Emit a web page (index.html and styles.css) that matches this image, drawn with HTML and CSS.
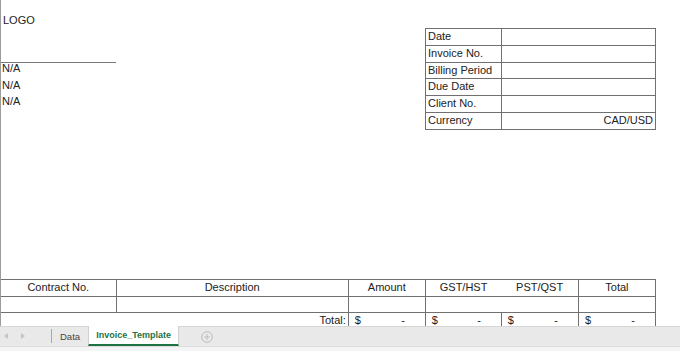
FILE: index.html
```html
<!DOCTYPE html>
<html lang="en">
<head>
    <meta charset="UTF-8">
    <title>Invoice_Template</title>
    <link rel="stylesheet" href="styles.css">
</head>
<body>
    <div class="sheet">
        <div class="top">
            <div class="from">
                <div class="logo">LOGO</div>
                <div class="sig-line"></div>
                <div class="na-list">
                    <div>N/A</div>
                    <div>N/A</div>
                    <div>N/A</div>
                </div>
            </div>

            <table class="meta">
                <colgroup><col class="meta-key"><col></colgroup>
                <tr><td>Date</td><td></td></tr>
                <tr><td>Invoice No.</td><td></td></tr>
                <tr><td>Billing Period</td><td></td></tr>
                <tr><td>Due Date</td><td></td></tr>
                <tr><td>Client No.</td><td></td></tr>
                <tr><td>Currency</td><td class="right">CAD/USD</td></tr>
            </table>
        </div>

        <table class="lines">
            <colgroup>
                <col class="c-contract">
                <col class="c-desc">
                <col class="c-amount">
                <col class="c-gst">
                <col class="c-pst">
                <col class="c-total">
            </colgroup>
            <tr class="head">
                <td class="first">Contract No.</td>
                <td>Description</td>
                <td>Amount</td>
                <td class="no-right">GST/HST</td>
                <td>PST/QST</td>
                <td>Total</td>
            </tr>
            <tr>
                <td class="first"></td>
                <td></td>
                <td></td>
                <td colspan="2"></td>
                <td></td>
            </tr>
            <tr class="sum">
                <td class="first right" colspan="2">Total:</td>
                <td><div class="money"><span>$</span><span>-</span></div></td>
                <td><div class="money"><span>$</span><span>-</span></div></td>
                <td><div class="money"><span>$</span><span>-</span></div></td>
                <td><div class="money"><span>$</span><span>-</span></div></td>
            </tr>
        </table>
    </div>

    <div class="tabs">
        <div class="tab-nav">
            <svg width="4" height="6" viewBox="0 0 4 6"><path d="M4 0 L0 3 L4 6 Z" fill="#c4c4c4"/></svg>
            <svg width="4" height="6" viewBox="0 0 4 6"><path d="M0 0 L4 3 L0 6 Z" fill="#c4c4c4"/></svg>
        </div>
        <div class="tab">Data</div>
        <div class="tab active">Invoice_Template</div>
        <div class="tab-add">
            <svg width="12" height="12" viewBox="0 0 12 12">
                <circle cx="6" cy="6" r="5.3" fill="none" stroke="#bdbdbd" stroke-width="1"/>
                <path d="M6 3.2 V8.8 M3.2 6 H8.8" stroke="#bdbdbd" stroke-width="1"/>
            </svg>
        </div>
    </div>
    <div class="status"></div>
</body>
</html>
```

FILE: styles.css
```css
body {
    margin: 0;
    width: 680px;
    height: 351px;
    overflow: hidden;
    background-color: #ffffff;
    color: #222222;
    font-family: 'Liberation Sans', Arial, sans-serif;
    font-size: 11px;
}
.sheet {
    height: 326px;
    overflow: hidden;
    border-left: 1px solid #9c9c9c;
    box-sizing: border-box;
}
.top {
    display: flex;
    justify-content: space-between;
    align-items: flex-start;
}
.from {
    width: 115px;
}
.logo {
    margin-top: 12px;
    padding-left: 2px;
    line-height: 17px;
}
.sig-line {
    height: 0;
    margin-top: 33px;
    border-bottom: 1px solid #7a7a7a;
}
.na-list {
    margin-top: -3px;
    padding-left: 1px;
    line-height: 16.5px;
}
table {
    border-collapse: collapse;
    table-layout: fixed;
}
td {
    border: 1px solid #707070;
    height: 15.8px;
    padding: 0 2px;
    line-height: 15.8px;
    white-space: nowrap;
    overflow: hidden;
}
.right {
    text-align: right;
}
.meta {
    width: 231px;
    margin-top: 28px;
    margin-right: 24px;
}
.meta-key {
    width: 76px;
}
.lines {
    width: 655px;
    margin-top: 149px;
}
.c-contract { width: 115px; }
.c-desc { width: 232px; }
.c-amount { width: 77px; }
.c-gst { width: 76px; }
.c-pst { width: 77px; }
.c-total { width: 77px; }
.lines .first {
    border-left: none;
}
.lines .head td {
    text-align: center;
}
.lines td.no-right {
    border-right-style: hidden;
}
.lines .sum td {
    line-height: 14px;
    vertical-align: top;
}
.money {
    display: flex;
    justify-content: space-between;
    padding: 0 18px 0 4px;
}
.tabs {
    height: 20px;
    display: flex;
    align-items: stretch;
    background-color: #e9e9e9;
    border-top: 1px solid #d6d6d6;
    box-sizing: border-box;
    font-size: 9.5px;
}
.tab-nav {
    width: 52px;
    display: flex;
    align-items: center;
    gap: 13px;
    padding-left: 4px;
    box-sizing: border-box;
    border-right: 1px solid #a8a8a8;
    margin: 2px 0 3px 0;
}
.tab {
    display: flex;
    align-items: center;
    padding: 0 8px;
    color: #444444;
}
.tab.active {
    width: 91px;
    box-sizing: border-box;
    justify-content: center;
    padding: 0;
    background-color: #ffffff;
    color: #1f7244;
    font-weight: bold;
    font-size: 9px;
    margin-top: -1px;
    border-left: 1px solid #d0d0d0;
    border-right: 1px solid #d0d0d0;
    border-bottom: 2px solid #1f7244;
}
.tab-add {
    display: flex;
    align-items: center;
    padding-left: 22px;
}
.status {
    height: 5px;
    background-color: #f4f4f4;
    border-top: 1px solid #dcdcdc;
}
```
